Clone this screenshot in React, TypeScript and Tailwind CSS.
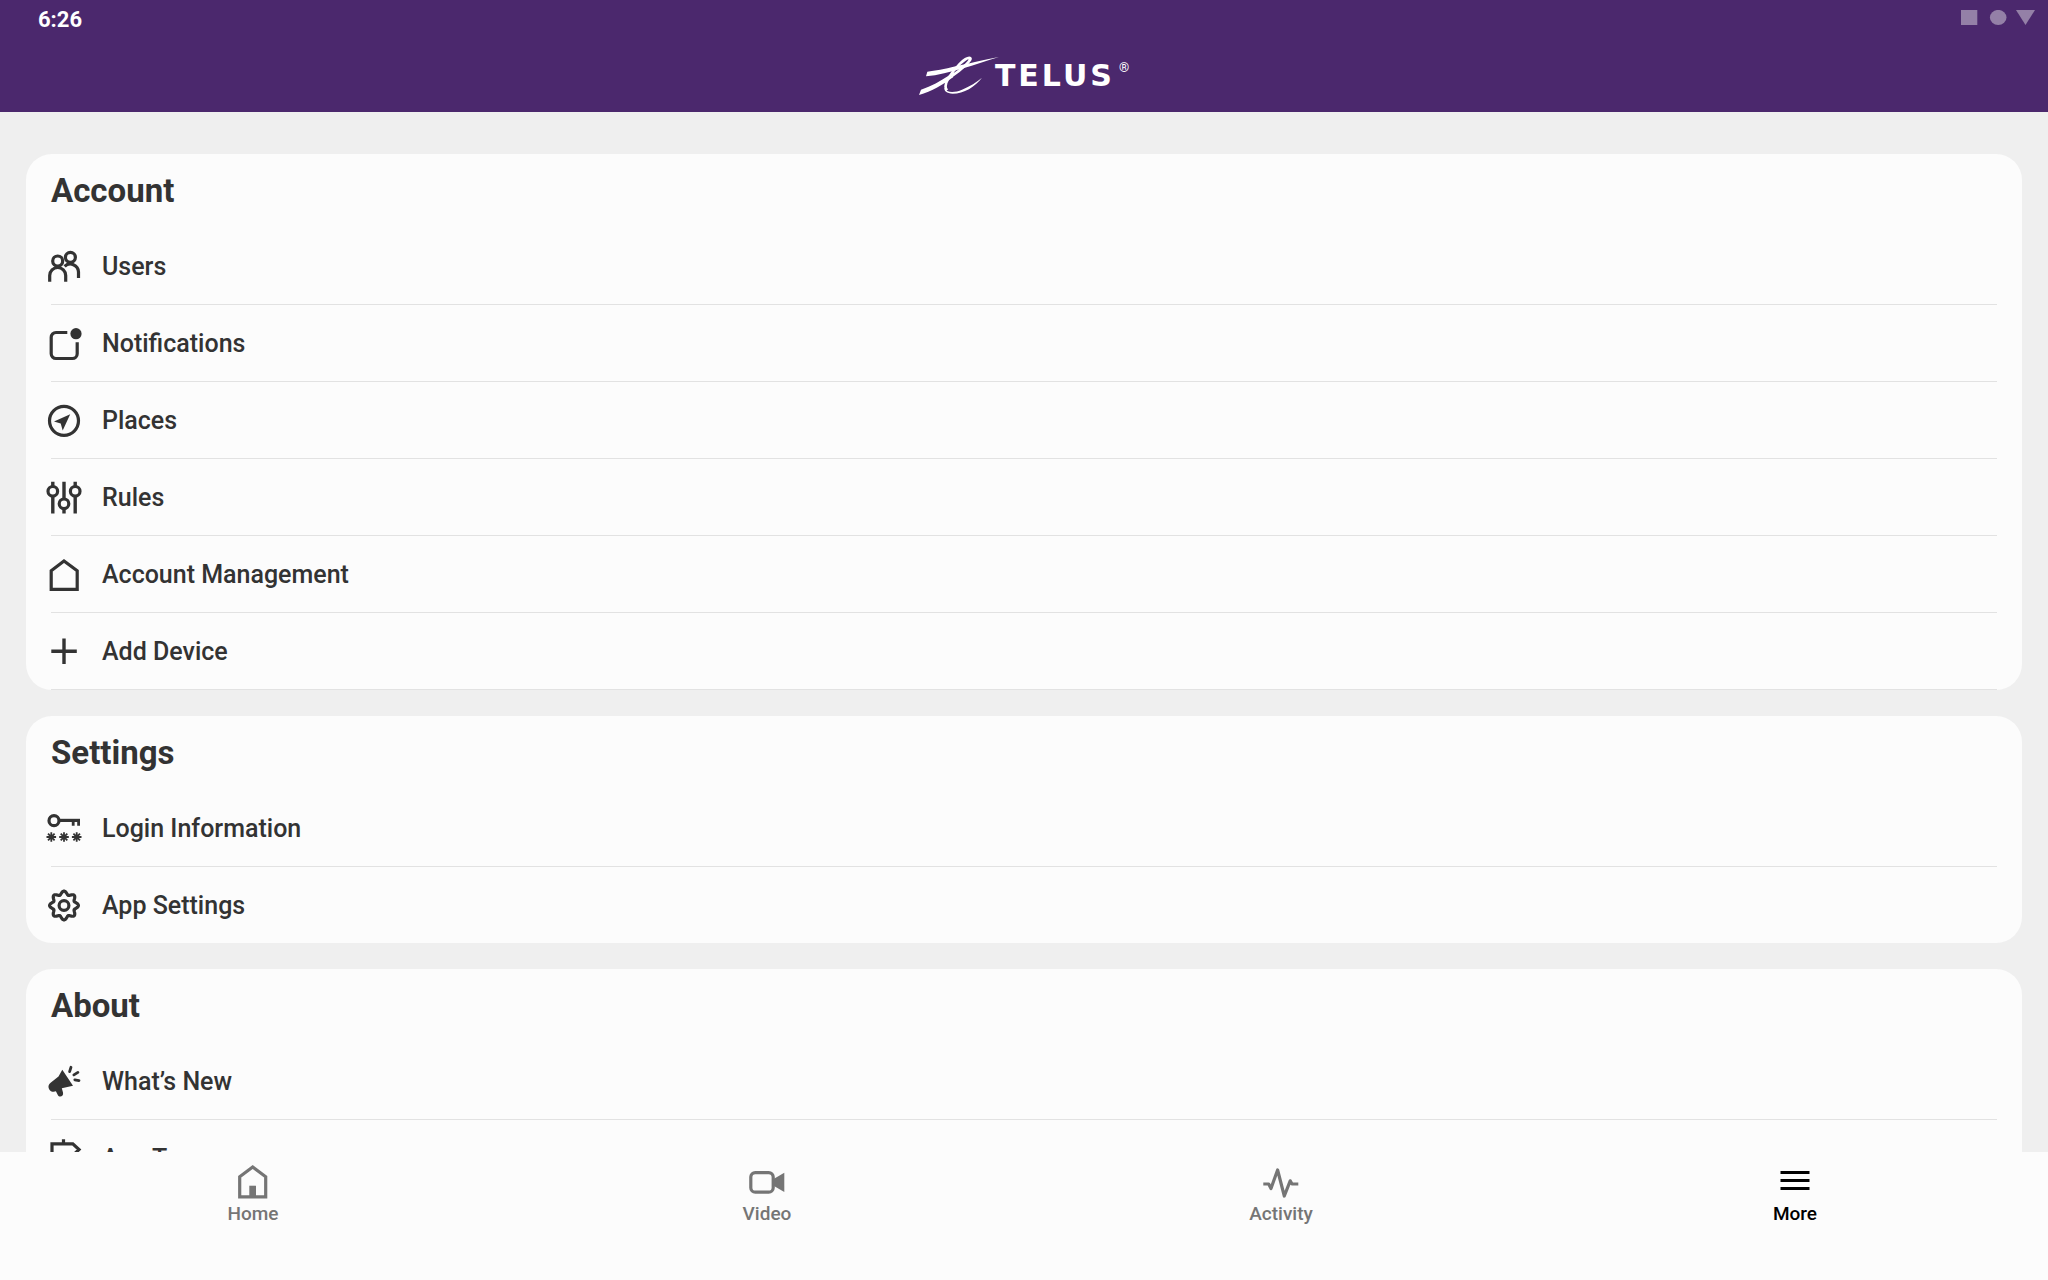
import type { ReactNode } from "react";

const gearPath = (() => {
  const points: string[] = [];
  for (let i = 0; i < 192; i++) {
    const angle = (i / 192) * Math.PI * 2;
    const radius = 12.7 + 1.7 * Math.cos(8 * angle);
    points.push(
      `${(19 + radius * Math.sin(angle)).toFixed(2)} ${(19.5 - radius * Math.cos(angle)).toFixed(2)}`
    );
  }
  return `M${points.join("L")}Z`;
})();

function Icon({ children }: { children: ReactNode }) {
  return (
    <svg
      className="size-[38px] shrink-0"
      viewBox="0 0 38 38"
      fill="none"
      stroke="currentColor"
      strokeWidth="3.2"
      aria-hidden="true"
    >
      {children}
    </svg>
  );
}

const UsersIcon = () => (
  <Icon>
    <circle cx="12.7" cy="14" r="5" />
    <circle cx="25.4" cy="10.3" r="5" />
    <path d="M4.7 34.7V28.5a8 8 0 0 1 16 0V34.7" />
    <path d="M19.6 19.4A8.2 8.2 0 0 1 33.5 25V31" />
  </Icon>
);

const NotificationsIcon = () => (
  <Icon>
    <path d="M22.3 8.5H11a4.8 4.8 0 0 0-4.8 4.8V29.7a4.8 4.8 0 0 0 4.8 4.8H27.4a4.8 4.8 0 0 0 4.8-4.8V18.3" />
    <circle cx="31" cy="9.7" r="5.6" fill="currentColor" stroke="none" />
  </Icon>
);

const PlacesIcon = () => (
  <Icon>
    <circle cx="19" cy="19.8" r="14.5" />
    <path d="M25.2 13.2L9 20.4l6.7 2.2 2 6.8z" fill="currentColor" stroke="none" />
  </Icon>
);

const RulesIcon = () => (
  <Icon>
    <circle cx="7.8" cy="13.3" r="4.8" />
    <circle cx="30.2" cy="13.3" r="4.8" />
    <circle cx="19" cy="25.8" r="4.8" />
    <path
      d="M7.8 3.7V8.5M7.8 18V35.4M30.2 3.7V8.5M30.2 18V35.4M19 3.7V21M19 30.5V35.4"
      strokeWidth="3.4"
    />
  </Icon>
);

const HouseIcon = () => (
  <Icon>
    <path d="M6.2 34.3V15.8L19 5.9l13.2 9.9V34.3z" />
  </Icon>
);

const PlusIcon = () => (
  <Icon>
    <path d="M6.3 19.2H31.8M19 6.4V32" strokeWidth="3.4" />
  </Icon>
);

const LoginIcon = () => (
  <Icon>
    <circle cx="9" cy="11.7" r="5" />
    <path d="M14.5 11.4H35" />
    <path d="M28.2 11.5V16.7M33.6 11.5V16.7" strokeWidth="2.8" />
    {[6.3, 19, 31.7].map((x) => (
      <path
        key={x}
        d={`M${x} 23.2v9.6M${x - 4.8} 28h9.6M${x - 3.3} 24.7l6.6 6.6M${x + 3.3} 24.7l-6.6 6.6`}
        strokeWidth="1.8"
      />
    ))}
  </Icon>
);

const GearIcon = () => (
  <Icon>
    <path d={gearPath} strokeLinejoin="round" />
    <circle cx="19" cy="19.5" r="4.9" />
  </Icon>
);

const MegaphoneIcon = () => (
  <Icon>
    <path
      d="M17.3 7.8L28 23.8L16.8 26.2L18 30.6C19 34.6 14.2 36 12.8 33L10.9 29.3C8.6 30.4 5.2 29.6 4 26.9C2.8 24.2 3.7 22.2 5.6 20.7L13.5 14.6z"
      fill="currentColor"
      stroke="none"
    />
    <path
      d="M26 5.3L24.6 9.6M28.9 12.9L32.9 10.4M29.8 17.8L34 18.6"
      strokeWidth="2.8"
      strokeLinecap="round"
    />
  </Icon>
);

const SignpostIcon = () => (
  <Icon>
    <path d="M18.5 0.3V5M18.5 16V37M7 16.4V4.8H27.8L34 10.6L27.8 16.4z" />
  </Icon>
);

const HomeNavIcon = () => (
  <Icon>
    <path d="M5.7 34.8V14.8L18.7 5l13 9.8V34.8z" />
    <path d="M15.3 23.7H22V34.8H15.3z" fill="currentColor" stroke="none" />
  </Icon>
);

const VideoNavIcon = () => (
  <Icon>
    <rect x="2.8" y="10.6" width="22.4" height="19.6" rx="4.5" />
    <path d="M26 16.8L36.3 10.7V30L26 23.9z" fill="currentColor" stroke="none" />
  </Icon>
);

const ActivityNavIcon = () => (
  <Icon>
    <path d="M1.3 22H6.7L9 26.5L15.6 8L22.3 34L28.2 18.8L30 22H36.3" strokeLinejoin="round" />
  </Icon>
);

const MoreNavIcon = () => (
  <Icon>
    <path d="M4.5 10.5H33.5M4.5 18.5H33.5M4.5 26.5H33.5" />
  </Icon>
);

type Item = { label: string; icon: () => ReactNode };

const sections: { title: string; items: Item[] }[] = [
  {
    title: "Account",
    items: [
      { label: "Users", icon: UsersIcon },
      { label: "Notifications", icon: NotificationsIcon },
      { label: "Places", icon: PlacesIcon },
      { label: "Rules", icon: RulesIcon },
      { label: "Account Management", icon: HouseIcon },
      { label: "Add Device", icon: PlusIcon },
    ],
  },
  {
    title: "Settings",
    items: [
      { label: "Login Information", icon: LoginIcon },
      { label: "App Settings", icon: GearIcon },
    ],
  },
  {
    title: "About",
    items: [
      { label: "What’s New", icon: MegaphoneIcon },
      { label: "App Tour", icon: SignpostIcon },
    ],
  },
];

const tabs: (Item & { active?: boolean })[] = [
  { label: "Home", icon: HomeNavIcon },
  { label: "Video", icon: VideoNavIcon },
  { label: "Activity", icon: ActivityNavIcon },
  { label: "More", icon: MoreNavIcon, active: true },
];

function Logo() {
  return (
    <div className="flex items-center text-white">
      <svg className="h-10 w-20" viewBox="57 48 240 120" fill="currentColor" aria-hidden="true">
        <path d="M82 95C130 90 190 72 297 51C225 73 150 102 78 109z" />
        <path d="M57 165L63 149C95 139 120 124 148 106L160 111C130 134 95 154 57 165z" />
        <path d="M134 143C139 160 165 158 186 149C210 139 230 126 246 113C225 140 192 161 158 161C140 160 131 152 134 143z" />
        <path
          d="M154 109C185 88 219 57 210 54C197 50 163 85 145 115C136 130 134 143 141 151"
          fill="none"
          stroke="currentColor"
          strokeWidth="8"
        />
      </svg>
      <span className="-ml-1 font-['DejaVu_Sans',sans-serif] text-[30px] leading-10 font-bold tracking-widest">
        TELUS
      </span>
      <span className="ml-1 self-start pt-1 font-['Roboto',sans-serif] text-[13px] leading-4">®</span>
    </div>
  );
}

function Header() {
  return (
    <header className="shrink-0 bg-[#4b286d]">
      <div className="flex h-10 items-center justify-between pr-[13px] pl-[38px]">
        <time className="text-[22px] leading-6 font-bold text-white">6:26</time>
        <svg
          className="mt-[10px] h-4 w-[74px] self-start text-[#9480a7]"
          viewBox="0 0 74 16"
          fill="currentColor"
          aria-hidden="true"
        >
          <path d="M0 0H16.3V15H0z" />
          <ellipse cx="37.2" cy="7.5" rx="8.3" ry="7.6" />
          <path d="M55 0H74L64.5 15z" />
        </svg>
      </div>
      <div className="flex h-[72px] items-center justify-center">
        <Logo />
      </div>
    </header>
  );
}

function Section({ title, items }: { title: string; items: Item[] }) {
  const lined = title === "Account";
  return (
    <section className="shrink-0 rounded-[26px] bg-[#fcfcfc] px-[25px]">
      <h2 className="h-[74px] pt-[18px] text-[33px] leading-[38px] font-bold">{title}</h2>
      <ul>
        {items.map(({ label, icon: ItemIcon }, i) => (
          <li key={label} className={lined || i < items.length - 1 ? "border-b border-[#e2e2e2]" : ""}>
            <a href="#" className="-ml-1.5 flex h-[76px] items-center gap-[19px] text-[25px] leading-8 font-medium">
              <ItemIcon />
              <span className="pt-0.5">{label}</span>
            </a>
          </li>
        ))}
      </ul>
    </section>
  );
}

export default function App() {
  return (
    <div className="flex h-screen flex-col bg-[#efefef] font-['Roboto',sans-serif] text-[#333333]">
      <Header />
      <main className="flex min-h-0 flex-1 flex-col gap-[26px] overflow-hidden px-[26px] pt-[42px]">
        {sections.map((section) => (
          <Section key={section.title} {...section} />
        ))}
      </main>
      <nav className="grid h-32 shrink-0 grid-cols-4 gap-2 bg-[#fcfcfc]">
        {tabs.map(({ label, icon: TabIcon, active }) => (
          <button
            key={label}
            type="button"
            aria-current={active ? "page" : undefined}
            className={`flex flex-col items-center gap-[2px] pt-[10px] text-[19px] leading-6 font-medium ${
              active ? "text-black" : "text-[#757575]"
            }`}
          >
            <TabIcon />
            {label}
          </button>
        ))}
      </nav>
    </div>
  );
}
